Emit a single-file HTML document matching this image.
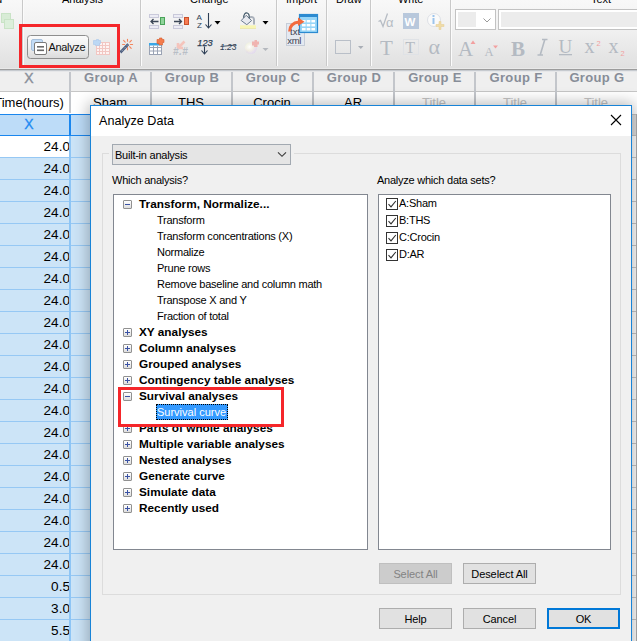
<!DOCTYPE html>
<html><head><meta charset="utf-8">
<style>
*{margin:0;padding:0;box-sizing:border-box}
html,body{width:637px;height:641px;overflow:hidden;background:#fff;font-family:"Liberation Sans",sans-serif;position:relative}
.a{position:absolute}
#ribbon{left:0;top:0;width:637px;height:68px;background:linear-gradient(#f8f8f8,#f0f0f0 45%,#e0e0e0);}
.sep{position:absolute;top:0;width:1px;height:66px;background:#c9c9c9;box-shadow:1px 0 0 #fbfbfb}
.glab{position:absolute;top:-7px;font-size:11px;color:#000;white-space:nowrap}
#rb-bottom{left:0;top:68px;width:637px;height:4px;background:linear-gradient(#e9e9e9 0,#e9e9e9 1px,#9c9c9c 1px,#9c9c9c 2px,#c6cacf 2px,#c6cacf 3px,#e6e7e9 3px)}
/* grid */
.hdr{position:absolute;top:72px;height:19px;background:#efefef;font-weight:bold;font-size:13px;color:#878d98;text-align:center;line-height:11px;letter-spacing:0.35px}
.ttl{position:absolute;top:92px;height:21px;background:#fff;font-size:13px;text-align:center;line-height:21px;color:#000}
.vl{position:absolute;width:2px;background:#c3c6cb}
.hl{position:absolute;height:1px;background:#c6c6c6}
.cell{position:absolute;left:-10px;width:80px;height:22px;font-size:13.6px;text-align:right;padding-right:0;line-height:21px;color:#000}
/* dialog */
#dlg{left:90px;top:105px;width:542px;height:560px;border:1px solid #1883d7;background:#f0f0f0;box-shadow:0 0 14px 2px rgba(0,0,0,0.28)}
.t{position:absolute;white-space:nowrap;font-size:11px;letter-spacing:-0.24px;color:#000}
.b{position:absolute;white-space:nowrap;font-size:11.8px;font-weight:bold;color:#000}
.exp{position:absolute;left:123px;width:9px;height:9px;border:1px solid #919191;border-radius:1px;background:linear-gradient(#fff,#dedede)}
.exp:before{content:"";position:absolute;left:1px;top:3px;width:5px;height:1.3px;background:#3a52a4}
.exp.p:after{content:"";position:absolute;left:3px;top:1px;width:1.3px;height:5px;background:#3a52a4}
.btn{position:absolute;height:21px;width:73px;background:#e1e1e1;border:1px solid #adadad;font-size:11px;text-align:center;line-height:20px;letter-spacing:-0.1px}
.cb{position:absolute;left:386px;width:12px;height:12px;border:1px solid #333;background:#fff}
.red{position:absolute;border:3px solid #f5262a}
</style></head><body>

<!-- ================= RIBBON ================= -->
<div id="ribbon" class="a"></div>
<div class="sep" style="left:22px"></div>
<div class="sep" style="left:140px"></div>
<div class="sep" style="left:276px"></div>
<div class="sep" style="left:326px"></div>
<div class="sep" style="left:370px"></div>
<div class="sep" style="left:450px"></div>
<div class="glab" style="left:-4px">d</div>
<div class="glab" style="left:62px">Analysis</div>
<div class="glab" style="left:190px">Change</div>
<div class="glab" style="left:286px">Import</div>
<div class="glab" style="left:336px">Draw</div>
<div class="glab" style="left:398px">Write</div>
<div class="glab" style="left:591px">Text</div>
<div id="rb-bottom" class="a"></div>
<svg class="a" style="left:0;top:0" width="637" height="68" viewBox="0 0 637 68" font-family="Liberation Sans">
<!-- left green -->
<rect x="1.5" y="13.5" width="9" height="9" fill="#d8ecd6" stroke="#c9e3c6"/>
<rect x="4.5" y="19.5" width="9" height="9" fill="#dcefdb" stroke="#c9e3c6"/>
<!-- Analyze button -->
<rect x="27.5" y="35.5" width="61" height="23" rx="3" fill="url(#gbtn)" stroke="#8e8e8e"/>
<defs>
<linearGradient id="gbtn" x1="0" y1="0" x2="0" y2="1"><stop offset="0" stop-color="#fbfbfb"/><stop offset="0.5" stop-color="#f0f0f0"/><stop offset="1" stop-color="#dadada"/></linearGradient>
</defs>
<rect x="31.5" y="39.5" width="11" height="11" rx="1.5" fill="#c3dcf6" stroke="#a6c0dc"/>
<rect x="34.5" y="42.5" width="12" height="12" rx="1.5" fill="#fff" stroke="#7a7a7a"/>
<rect x="37" y="46" width="7" height="1.6" fill="#6a6a6a"/>
<rect x="37" y="49.5" width="7" height="1.6" fill="#6a6a6a"/>
<text x="48.6" y="51" font-size="11" fill="#111" letter-spacing="-0.35">Analyze</text>
<!-- faded grid -->
<g stroke="#f2c6c2" stroke-width="1" fill="#fdf3f2">
<rect x="96.5" y="42.5" width="13" height="12"/>
</g>
<g stroke="#f2c6c2" stroke-width="1">
<path d="M96 45.5H110M96 48.5H110M96 51.5H110M99.5 42V55M102.5 42V55M105.5 42V55"/>
</g>
<path d="M93.5 40.5h3v-1h2v1h2v3h-1v2h-4v-1h-2z" fill="#bcd8f4" stroke="#a8c8ec" stroke-width="0.6"/>
<!-- magic wand -->
<g stroke="#f3845c" stroke-width="1.1" stroke-linecap="round">
<path d="M127.5 39.3v2M127.5 47.5v2.2M122.6 44.5h2M130.4 44.5h2.2M123.6 40.4l1.6 1.8M131.4 40.4l-1.6 1.8M129.6 46.6l1.6 1.8"/>
</g>
<path d="M120.3 52.5 L128.3 44.2" stroke="#46587a" stroke-width="2.6"/>
<path d="M120.3 52.5 L128.3 44.2" stroke="#dfe6f0" stroke-width="0.8" stroke-dasharray="1 1.2"/>
<!-- Change: insert left -->
<rect x="149.5" y="14.5" width="9" height="3" fill="#ececf4" stroke="#c9c9da"/>
<rect x="149.5" y="25.5" width="9" height="3" fill="#ececf4" stroke="#c9c9da"/>
<path d="M151 21.5H158.5M153.5 19L151 21.5L153.5 24" stroke="#3b4656" stroke-width="1.3" fill="none"/>
<rect x="160.5" y="17.5" width="4" height="7" fill="#8fd49a" stroke="#4aa35a"/>
<!-- insert right -->
<rect x="173.5" y="14.5" width="9" height="3" fill="#ececf4" stroke="#c9c9da"/>
<rect x="173.5" y="25.5" width="9" height="3" fill="#ececf4" stroke="#c9c9da"/>
<path d="M174 21.5H181.5M179 19L181.5 21.5L179 24" stroke="#3b4656" stroke-width="1.3" fill="none"/>
<rect x="184.5" y="17.5" width="4" height="7" fill="#f77b52" stroke="#c8502a"/>
<!-- sort AZ -->
<text x="196.6" y="19.6" font-size="8" fill="#2d3e55">A</text>
<text x="197" y="28" font-size="8" fill="#2d3e55">Z</text>
<path d="M208.5 13V28M205.5 24.5L208.5 28L211.5 24.5" stroke="#2d3e55" stroke-width="1.1" fill="none"/>
<path d="M214.5 21H220.5L217.5 24.5Z" fill="#000"/>
<!-- paint bucket -->
<path d="M249.8 17.2 Q254 16.2 254 19.5 V24.5" fill="none" stroke="#aab1bb" stroke-width="2"/>
<path d="M241.2 20.5L246.2 15.3L251.6 20.6L246.8 24.7Z" fill="#e8eaf0" stroke="#66768a" stroke-width="0.95"/>
<path d="M243.6 17.8 Q243.8 12.6 247.2 13 Q249.6 13.6 249.2 18.2" fill="none" stroke="#3e5566" stroke-width="1.2"/>
<rect x="240" y="25.3" width="16" height="3.3" fill="#f8f6b4"/>
<rect x="240" y="28" width="16" height="0.6" fill="#e6e0a0"/>
<path d="M262.5 21H268.5L265.5 24.5Z" fill="#000"/>
<!-- row 2 change -->
<rect x="149.5" y="43.5" width="12" height="11" fill="#fff" stroke="#9aa3b4"/>
<rect x="149" y="43" width="13" height="2.5" fill="#3aa8e8"/>
<path d="M149.5 47.5H161.5M149.5 51H161.5M153.5 45.5V54.5M157.5 45.5V54.5" stroke="#9aa3b4" stroke-width="1"/>
<path d="M157 39.5h2.5v-1.5h2.5v1.5h2v3h-1.5v2.5h-3.5v-1.5h-2z" fill="#f47c4c" stroke="#d85a2c" stroke-width="0.6"/>
<text x="173" y="54.8" font-size="10" fill="#b8bec6" font-style="italic" font-weight="bold" letter-spacing="0.4">#.#</text>
<path d="M178 48L184.5 41.5M178 48V43M178 48H183" stroke="#f4c4bc" stroke-width="2.6" fill="none"/>
<text x="197.3" y="45.6" font-size="9.2" fill="#2d3e55" font-style="italic" stroke="#2d3e55" stroke-width="0.25">123</text>
<path d="M204.5 46.5V54M201.5 50.5L204.5 54L207.5 50.5" stroke="#2d3e55" stroke-width="1.1" fill="none"/>
<text x="220" y="49.8" font-size="8.5" fill="#2d3e55" font-style="italic">1.23</text>
<path d="M220.5 46.5L236 45" stroke="#2d3e55" stroke-width="0.9"/>
<defs><radialGradient id="gw" cx="0.4" cy="0.4" r="0.65"><stop offset="0" stop-color="#ffffff"/><stop offset="0.5" stop-color="#f0ece0"/><stop offset="1" stop-color="#d8d0e8"/></radialGradient><linearGradient id="gw2" x1="0" y1="0" x2="1" y2="1"><stop offset="0" stop-color="#e8f4d8" stop-opacity="0.8"/><stop offset="0.5" stop-color="#ffffff" stop-opacity="0"/><stop offset="1" stop-color="#e0d0f0" stop-opacity="0.8"/></linearGradient></defs>
<circle cx="250.7" cy="48" r="6" fill="url(#gw)"/><circle cx="250.7" cy="48" r="6" fill="url(#gw2)"/>
<path d="M252 41.5h2.5v-1.5h2.5v1.5h2v3h-1.5v2.5h-3.5v-1.5h-2z" fill="#f0b4b0"/>
<path d="M262.5 48H268.5L265.5 51Z" fill="#b4b8be"/>
<!-- Import -->
<rect x="286.5" y="23.5" width="18" height="22" fill="#e4e9f1" stroke="#c6cdd8"/>
<text x="290" y="35" font-size="9.5" fill="#3a4250">txt</text>
<text x="287.2" y="43.5" font-size="9.5" fill="#3a4250" letter-spacing="-0.3">xml</text>
<rect x="299.5" y="14.5" width="18" height="18" fill="#98d6f8" stroke="#2c8ad0" stroke-width="1.2"/>
<rect x="299.5" y="14.5" width="18" height="2.5" fill="#2c8ad0"/>
<g fill="#fff"><rect x="302" y="20" width="3.6" height="2.4"/><rect x="306.7" y="20" width="3.6" height="2.4"/><rect x="311.4" y="20" width="3.6" height="2.4"/><rect x="302" y="24" width="3.6" height="2.4"/><rect x="306.7" y="24" width="3.6" height="2.4"/><rect x="311.4" y="24" width="3.6" height="2.4"/><rect x="302" y="28" width="3.6" height="2.4"/><rect x="306.7" y="28" width="3.6" height="2.4"/><rect x="311.4" y="28" width="3.6" height="2.4"/></g>
<path d="M289.5 31.5 Q290 23 299 22" fill="none" stroke="#f26a3e" stroke-width="2.8"/>
<path d="M298 17.5L304.5 21.8L298 26Z" fill="#f26a3e"/>
<!-- Draw -->
<rect x="335.5" y="40.5" width="15" height="13" fill="none" stroke="#b9bfc8"/>
<path d="M358 46H363.5L360.8 49Z" fill="#a9aeb6"/>
<!-- Write -->
<path d="M378.5 21.5L380.5 20.5L383 26.5L387.5 13.5" fill="none" stroke="#b6bcc4" stroke-width="1.3"/>
<text x="386" y="26.5" font-size="13" fill="#b6bcc4" font-family="Liberation Sans">&#945;</text>
<rect x="403" y="13" width="16" height="16" fill="#b8c8dc"/>
<text x="404.6" y="25.5" font-size="11.5" fill="#fff" font-weight="bold">W</text>
<circle cx="434" cy="20" r="6.5" fill="#fafafa" stroke="#dde0e6"/>
<rect x="432.5" y="15" width="2" height="2" fill="#9cc4ec"/>
<rect x="432.5" y="18" width="2" height="6" fill="#9cc4ec"/>
<path d="M436 24.5h3v-3h2v3h3v2h-3v3h-2v-3h-3z" fill="#f0dca8" stroke="#e4cc90" stroke-width="0.5"/>
<text x="380" y="54.5" font-size="21" fill="#b4bac2" font-family="Liberation Serif">T</text>
<rect x="403.5" y="39.5" width="15" height="15" fill="none" stroke="#dfe2e6"/>
<text x="405.2" y="52.5" font-size="16" fill="#b4bac2" font-family="Liberation Serif">T</text>
<text x="428.5" y="54" font-size="22" fill="#b4bac2" font-family="Liberation Serif">&#945;</text>
<!-- Text group -->
<rect x="455.5" y="9.5" width="40" height="20" fill="#fff" stroke="#c2c2c2"/>
<rect x="458" y="12" width="18" height="15" fill="#ececec"/>
<path d="M483.5 18.5L487 22L490.5 18.5" fill="none" stroke="#9a9a9a" stroke-width="1"/>
<rect x="498.5" y="9.5" width="145" height="20" fill="#fff" stroke="#c2c2c2"/>
<rect x="501" y="12" width="140" height="15" fill="#ececec"/>
<text x="458" y="55.5" font-size="21" fill="#b4bac2" font-family="Liberation Serif">A</text>
<path d="M470.5 44L473 40.5L475.5 44Z" fill="#f2a0a0"/>
<text x="484.5" y="55.5" font-size="12.5" fill="#b4bac2" font-family="Liberation Serif">A</text>
<path d="M493 45.5L498 45.5L495.5 48.5Z" fill="#f2a0a0"/>
<text x="511" y="55.5" font-size="21" fill="#b4bac2" font-family="Liberation Serif" font-weight="bold">B</text>
<path d="M542 39.5H547.5M537.5 55H543M544.8 39.5L540.2 55" fill="none" stroke="#b4bac2" stroke-width="1.6"/>
<text x="558.5" y="52.8" font-size="19" fill="#b4bac2" font-family="Liberation Serif">U</text>
<rect x="559" y="54" width="13" height="1.3" fill="#b4bac2"/>
<text x="584.5" y="53" font-size="20" fill="#b4bac2" font-family="Liberation Serif">x</text>
<text x="596.5" y="46" font-size="7.5" fill="#f2a0a0">2</text>
<text x="608.5" y="53" font-size="20" fill="#b4bac2" font-family="Liberation Serif">x</text>
<text x="620.5" y="55.5" font-size="7.5" fill="#f2a0a0">2</text>
</svg>


<!-- ================= GRID ================= -->
<div class="hdr" style="left:-11px;top:72px;width:80px;font-weight:normal;font-size:14px;-webkit-text-stroke:0.4px #8b919b;line-height:13px">X</div>
<div class="hdr" style="left:71px;width:80px">Group A</div>
<div class="hdr" style="left:152px;width:80px">Group B</div>
<div class="hdr" style="left:233px;width:80px">Group C</div>
<div class="hdr" style="left:314px;width:80px">Group D</div>
<div class="hdr" style="left:395px;width:80px">Group E</div>
<div class="hdr" style="left:476px;width:80px">Group F</div>
<div class="hdr" style="left:557px;width:80px">Group G</div>
<div class="hl" style="left:0;top:91px;width:637px"></div>
<div class="ttl" style="left:-11px;width:80px">Time(hours)</div>
<div class="ttl" style="left:70px;width:80px">Sham</div>
<div class="ttl" style="left:151px;width:80px">THS</div>
<div class="ttl" style="left:232px;width:80px">Crocin</div>
<div class="ttl" style="left:313px;width:80px">AR</div>
<div class="ttl" style="left:394px;width:80px;color:#c4c4c4">Title</div>
<div class="ttl" style="left:475px;width:80px;color:#c4c4c4">Title</div>
<div class="ttl" style="left:556px;width:80px;color:#c4c4c4">Title</div>
<div class="vl" style="left:69px;top:72px;height:41px"></div>
<div class="vl" style="left:150px;top:72px;height:41px"></div>
<div class="vl" style="left:231px;top:72px;height:41px"></div>
<div class="vl" style="left:312px;top:72px;height:41px"></div>
<div class="vl" style="left:393px;top:72px;height:41px"></div>
<div class="vl" style="left:474px;top:72px;height:41px"></div>
<div class="vl" style="left:555px;top:72px;height:41px"></div>
<!-- blue X row -->
<div class="a" style="left:151px;top:114px;width:486px;height:527px;background:#fff"></div>
<div class="a" style="left:151px;top:114px;width:486px;height:22px;background:#dedede;border-top:1px solid #c4c4c4;border-bottom:1px solid #c4c4c4"></div>
<div class="a" style="left:0;top:136px;width:151px;height:505px;background:#cce4f7"></div>
<div class="a" style="left:0;top:114px;width:151px;height:22px;background:#bddcf8;border-top:1px solid #1a86ee;border-bottom:1px solid #1a86ee"></div>
<div class="a" style="left:-11px;top:114px;width:80px;height:22px;font-size:14px;color:#1f8af2;text-align:center;line-height:21px;-webkit-text-stroke:0.3px #1f8af2">X</div>
<div class="a" style="left:0;top:136px;width:69px;height:21px;background:#fff"></div>
<div class="hl" style="left:0;top:157px;width:151px;background:#96c8f4"></div><div class="hl" style="left:151px;top:157px;width:486px;background:#c8c8c8"></div>
<div class="cell" style="top:136px">24.0</div>
<div class="hl" style="left:0;top:179px;width:151px;background:#96c8f4"></div><div class="hl" style="left:151px;top:179px;width:486px;background:#c8c8c8"></div>
<div class="cell" style="top:158px">24.0</div>
<div class="hl" style="left:0;top:201px;width:151px;background:#96c8f4"></div><div class="hl" style="left:151px;top:201px;width:486px;background:#c8c8c8"></div>
<div class="cell" style="top:180px">24.0</div>
<div class="hl" style="left:0;top:223px;width:151px;background:#96c8f4"></div><div class="hl" style="left:151px;top:223px;width:486px;background:#c8c8c8"></div>
<div class="cell" style="top:202px">24.0</div>
<div class="hl" style="left:0;top:245px;width:151px;background:#96c8f4"></div><div class="hl" style="left:151px;top:245px;width:486px;background:#c8c8c8"></div>
<div class="cell" style="top:224px">24.0</div>
<div class="hl" style="left:0;top:267px;width:151px;background:#96c8f4"></div><div class="hl" style="left:151px;top:267px;width:486px;background:#c8c8c8"></div>
<div class="cell" style="top:246px">24.0</div>
<div class="hl" style="left:0;top:289px;width:151px;background:#96c8f4"></div><div class="hl" style="left:151px;top:289px;width:486px;background:#c8c8c8"></div>
<div class="cell" style="top:268px">24.0</div>
<div class="hl" style="left:0;top:311px;width:151px;background:#96c8f4"></div><div class="hl" style="left:151px;top:311px;width:486px;background:#c8c8c8"></div>
<div class="cell" style="top:290px">24.0</div>
<div class="hl" style="left:0;top:333px;width:151px;background:#96c8f4"></div><div class="hl" style="left:151px;top:333px;width:486px;background:#c8c8c8"></div>
<div class="cell" style="top:312px">24.0</div>
<div class="hl" style="left:0;top:355px;width:151px;background:#96c8f4"></div><div class="hl" style="left:151px;top:355px;width:486px;background:#c8c8c8"></div>
<div class="cell" style="top:334px">24.0</div>
<div class="hl" style="left:0;top:377px;width:151px;background:#96c8f4"></div><div class="hl" style="left:151px;top:377px;width:486px;background:#c8c8c8"></div>
<div class="cell" style="top:356px">24.0</div>
<div class="hl" style="left:0;top:399px;width:151px;background:#96c8f4"></div><div class="hl" style="left:151px;top:399px;width:486px;background:#c8c8c8"></div>
<div class="cell" style="top:378px">24.0</div>
<div class="hl" style="left:0;top:421px;width:151px;background:#96c8f4"></div><div class="hl" style="left:151px;top:421px;width:486px;background:#c8c8c8"></div>
<div class="cell" style="top:400px">24.0</div>
<div class="hl" style="left:0;top:443px;width:151px;background:#96c8f4"></div><div class="hl" style="left:151px;top:443px;width:486px;background:#c8c8c8"></div>
<div class="cell" style="top:422px">24.0</div>
<div class="hl" style="left:0;top:465px;width:151px;background:#96c8f4"></div><div class="hl" style="left:151px;top:465px;width:486px;background:#c8c8c8"></div>
<div class="cell" style="top:444px">24.0</div>
<div class="hl" style="left:0;top:487px;width:151px;background:#96c8f4"></div><div class="hl" style="left:151px;top:487px;width:486px;background:#c8c8c8"></div>
<div class="cell" style="top:466px">24.0</div>
<div class="hl" style="left:0;top:509px;width:151px;background:#96c8f4"></div><div class="hl" style="left:151px;top:509px;width:486px;background:#c8c8c8"></div>
<div class="cell" style="top:488px">24.0</div>
<div class="hl" style="left:0;top:531px;width:151px;background:#96c8f4"></div><div class="hl" style="left:151px;top:531px;width:486px;background:#c8c8c8"></div>
<div class="cell" style="top:510px">24.0</div>
<div class="hl" style="left:0;top:553px;width:151px;background:#96c8f4"></div><div class="hl" style="left:151px;top:553px;width:486px;background:#c8c8c8"></div>
<div class="cell" style="top:532px">24.0</div>
<div class="hl" style="left:0;top:575px;width:151px;background:#96c8f4"></div><div class="hl" style="left:151px;top:575px;width:486px;background:#c8c8c8"></div>
<div class="cell" style="top:554px">24.0</div>
<div class="hl" style="left:0;top:597px;width:151px;background:#96c8f4"></div><div class="hl" style="left:151px;top:597px;width:486px;background:#c8c8c8"></div>
<div class="cell" style="top:576px">0.5</div>
<div class="hl" style="left:0;top:619px;width:151px;background:#96c8f4"></div><div class="hl" style="left:151px;top:619px;width:486px;background:#c8c8c8"></div>
<div class="cell" style="top:598px">3.0</div>
<div class="hl" style="left:0;top:641px;width:151px;background:#96c8f4"></div><div class="hl" style="left:151px;top:641px;width:486px;background:#c8c8c8"></div>
<div class="cell" style="top:620px">5.5</div>
<div class="a" style="left:69px;top:114px;width:2px;height:22px;background:#1a86ee"></div>
<div class="a" style="left:69px;top:136px;width:2px;height:505px;background:#8ec5f5"></div>
<div class="a" style="left:150px;top:114px;width:2px;height:527px;background:#c6c6c6"></div>
<div class="a" style="left:231px;top:114px;width:2px;height:527px;background:#c6c6c6"></div>
<div class="a" style="left:312px;top:114px;width:2px;height:527px;background:#c6c6c6"></div>
<div class="a" style="left:393px;top:114px;width:2px;height:527px;background:#c6c6c6"></div>
<div class="a" style="left:474px;top:114px;width:2px;height:527px;background:#c6c6c6"></div>
<div class="a" style="left:555px;top:114px;width:2px;height:527px;background:#c6c6c6"></div>
<div class="a" style="left:636px;top:114px;width:1px;height:527px;background:#b0b0b0"></div>

<!-- ================= DIALOG ================= -->
<div id="dlg" class="a">
</div>
<div class="a" style="left:91px;top:106px;width:540px;height:30px;background:#fff"></div>
<div class="t" style="left:99px;top:114px;font-size:12.6px;letter-spacing:0">Analyze Data</div>
<!-- groupbox -->
<div class="a" style="left:102px;top:153px;width:519px;height:442px;border:1px solid #dcdcdc"></div>
<div class="a" style="left:109px;top:150px;width:185px;height:6px;background:#f0f0f0"></div>
<!-- combo -->
<div class="a" style="left:112px;top:144px;width:179px;height:21px;border:1px solid #a2a9b1;background:#e5e5e5"></div>
<div class="t" style="left:115px;top:149px">Built-in analysis</div>
<svg class="a" style="left:277px;top:151px" width="10" height="7" viewBox="0 0 10 7"><path d="M1 1.3 L5 5.3 L9 1.3" fill="none" stroke="#3c3c3c" stroke-width="1.15"/></svg>
<div class="t" style="left:112px;top:174px">Which analysis?</div>
<div class="t" style="left:377px;top:174px">Analyze which data sets?</div>
<!-- tree -->
<div class="a" style="left:113px;top:194px;width:255px;height:356px;border:1px solid #828790;background:#fff"></div>
<div class="exp" style="top:200px"></div>
<div class="b" style="left:139px;top:197px">Transform, Normalize...</div>
<div class="t" style="left:157px;top:214px">Transform</div>
<div class="t" style="left:157px;top:230px">Transform concentrations (X)</div>
<div class="t" style="left:157px;top:246px">Normalize</div>
<div class="t" style="left:157px;top:262px">Prune rows</div>
<div class="t" style="left:157px;top:278px">Remove baseline and column math</div>
<div class="t" style="left:157px;top:294px">Transpose X and Y</div>
<div class="t" style="left:157px;top:310px">Fraction of total</div>
<div class="exp p" style="top:328px"></div>
<div class="b" style="left:139px;top:325px">XY analyses</div>
<div class="exp p" style="top:344px"></div>
<div class="b" style="left:139px;top:341px">Column analyses</div>
<div class="exp p" style="top:360px"></div>
<div class="b" style="left:139px;top:357px">Grouped analyses</div>
<div class="exp p" style="top:376px"></div>
<div class="b" style="left:139px;top:373px">Contingency table analyses</div>
<div class="exp" style="top:392px"></div>
<div class="b" style="left:139px;top:389px">Survival analyses</div>
<div class="a" style="left:156px;top:404px;width:72px;height:16px;background:#3399ff;border:1px dotted #000"></div>
<div class="t" style="left:157px;top:406px;color:#fff;letter-spacing:0">Survival curve</div>
<div class="exp p" style="top:424px"></div>
<div class="b" style="left:139px;top:421px">Parts of whole analyses</div>
<div class="exp p" style="top:440px"></div>
<div class="b" style="left:139px;top:437px">Multiple variable analyses</div>
<div class="exp p" style="top:456px"></div>
<div class="b" style="left:139px;top:453px">Nested analyses</div>
<div class="exp p" style="top:472px"></div>
<div class="b" style="left:139px;top:469px">Generate curve</div>
<div class="exp p" style="top:488px"></div>
<div class="b" style="left:139px;top:485px">Simulate data</div>
<div class="exp p" style="top:504px"></div>
<div class="b" style="left:139px;top:501px">Recently used</div>
<!-- right list -->
<div class="a" style="left:378px;top:194px;width:233px;height:356px;border:1px solid #828790;background:#fff"></div>
<div class="cb" style="top:198px"></div><svg class="a" style="left:387px;top:199px" width="10" height="10" viewBox="0 0 10 10"><path d="M1.5 5.2 L4 7.8 L8.8 2" fill="none" stroke="#303030" stroke-width="1.1"/></svg>
<div class="t" style="left:399px;top:197px">A:Sham</div>
<div class="cb" style="top:215px"></div><svg class="a" style="left:387px;top:216px" width="10" height="10" viewBox="0 0 10 10"><path d="M1.5 5.2 L4 7.8 L8.8 2" fill="none" stroke="#303030" stroke-width="1.1"/></svg>
<div class="t" style="left:399px;top:214px">B:THS</div>
<div class="cb" style="top:232px"></div><svg class="a" style="left:387px;top:233px" width="10" height="10" viewBox="0 0 10 10"><path d="M1.5 5.2 L4 7.8 L8.8 2" fill="none" stroke="#303030" stroke-width="1.1"/></svg>
<div class="t" style="left:399px;top:231px">C:Crocin</div>
<div class="cb" style="top:249px"></div><svg class="a" style="left:387px;top:250px" width="10" height="10" viewBox="0 0 10 10"><path d="M1.5 5.2 L4 7.8 L8.8 2" fill="none" stroke="#303030" stroke-width="1.1"/></svg>
<div class="t" style="left:399px;top:248px">D:AR</div>
<!-- buttons -->
<div class="btn" style="left:379px;top:563px;background:#cccccc;border-color:#bfbfbf;color:#838383">Select All</div>
<div class="btn" style="left:463px;top:563px">Deselect All</div>
<div class="btn" style="left:379px;top:608px">Help</div>
<div class="btn" style="left:463px;top:608px">Cancel</div>
<div class="btn" style="left:547px;top:608px;border:2px solid #0078d7;line-height:18px">OK</div>
<!-- close X -->
<svg class="a" style="left:610px;top:114px" width="12" height="12" viewBox="0 0 12 12"><path d="M1 1 L11 11 M11 1 L1 11" stroke="#000" stroke-width="1.1"/></svg>


<div class="red" style="left:118px;top:387px;width:166px;height:40px"></div>
<div class="red" style="left:19px;top:24px;width:101px;height:44px"></div>
</body></html>
